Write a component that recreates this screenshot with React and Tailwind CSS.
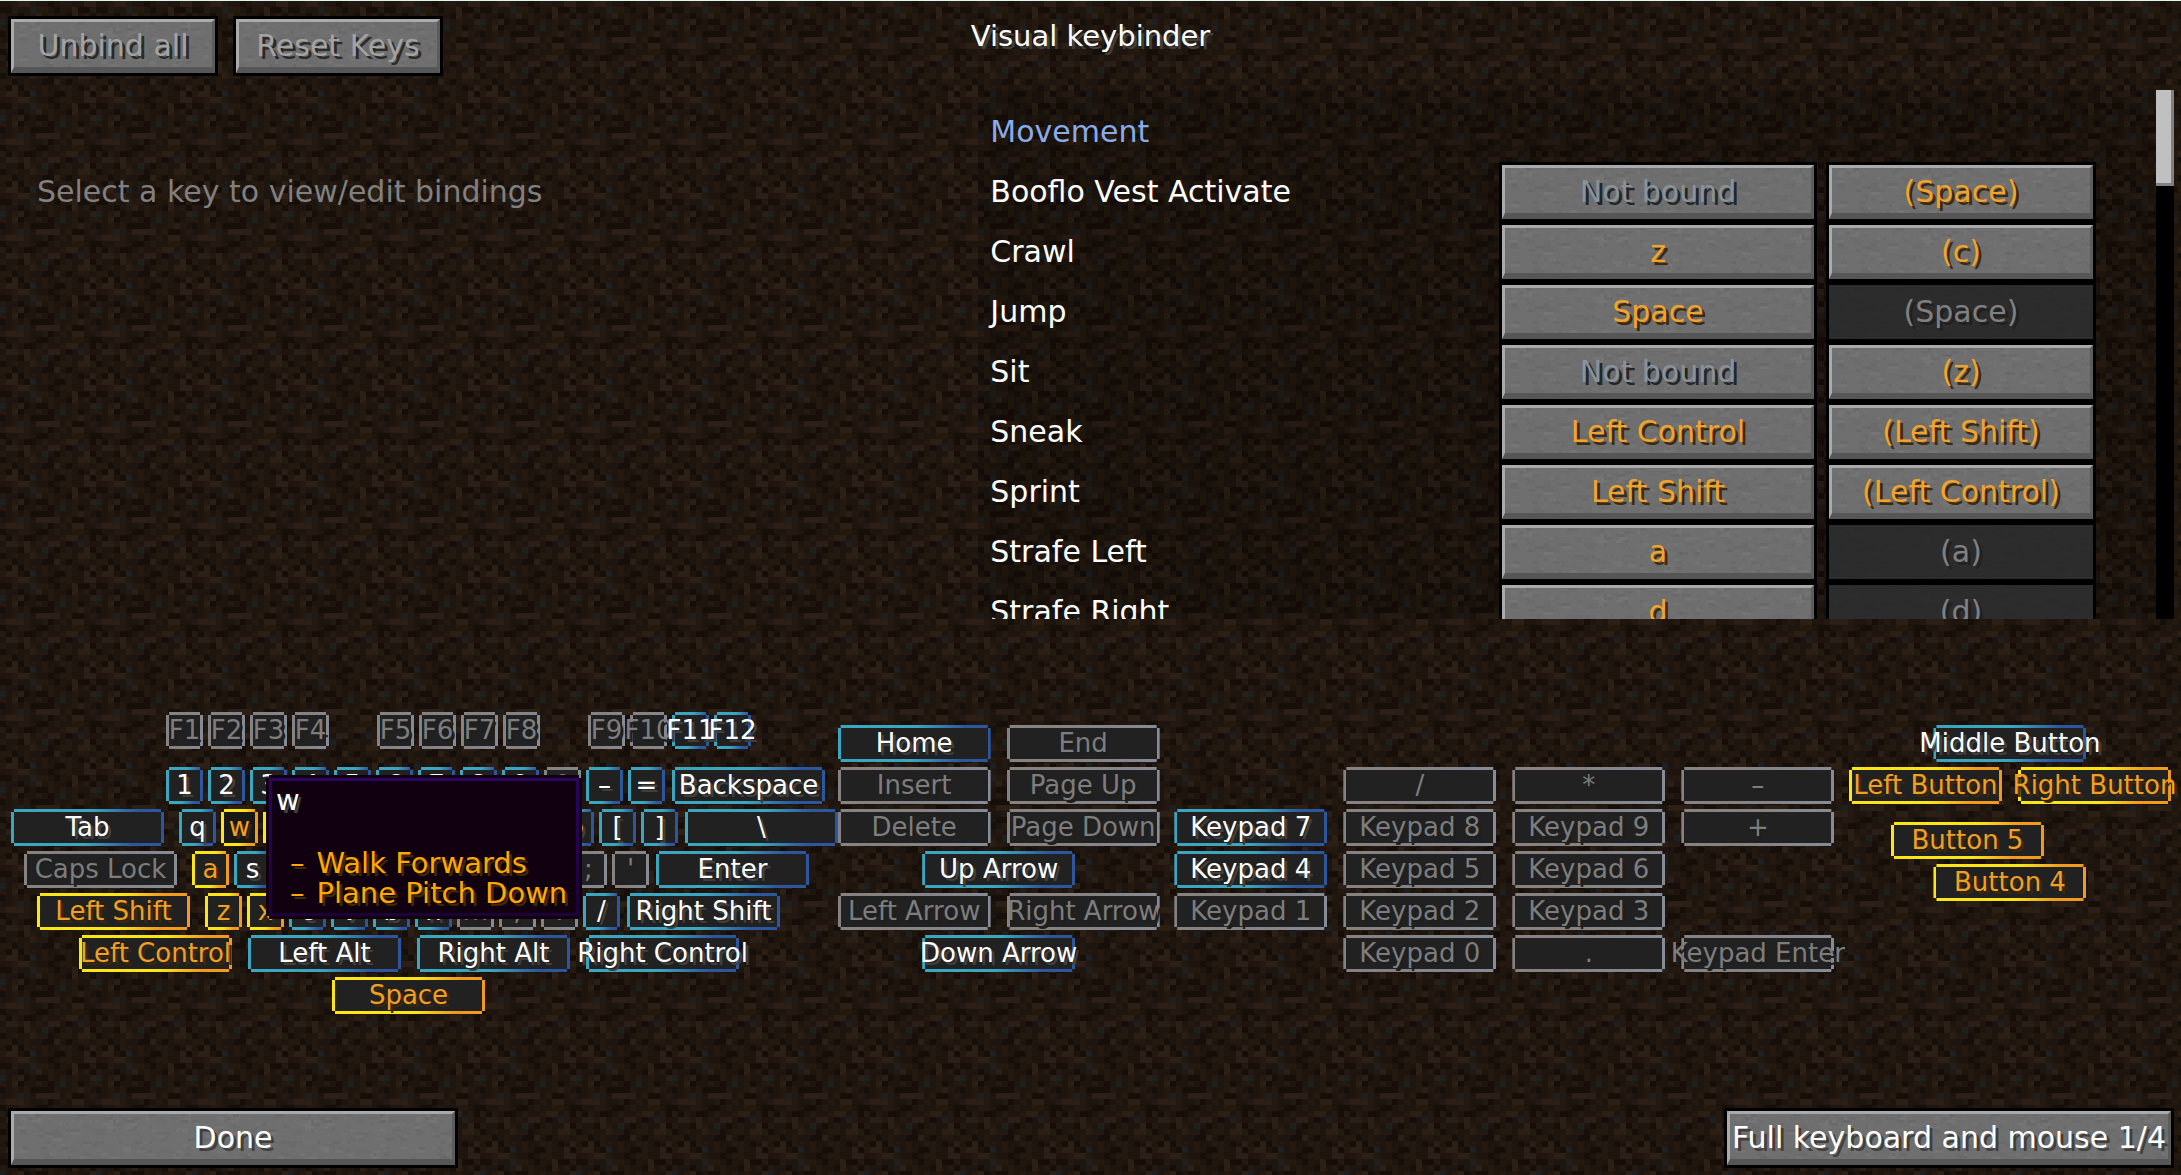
import { useState } from 'react'
import clsx from 'clsx'

// 16x16 dirt tile: D dark, . base, m mid, B light, s stone fleck
const DIRT = [
  '..mBBm..D.mm..BB',
  'DDm..smm.D..BDDm',
  'm..D.mB.m..DB.mD',
  's.mBD.DDm.m.m..B',
  'm.BD..m.D.s.mD.m',
  'D.m.mDDDDm..mBm.',
  '..msm.BBBB.mDD.m',
  'mBBBm..mD.m.BB..',
  'D..mm.DD.m..mm.D',
  'mDm.DD.m..mBB.mD',
  '.BBmB.m.BB.D.sm.',
  'm..DBm.s.D.m..BD',
  'D.m..BmmD.mm.BBm',
  'mmD.m..DDB.D.mm.',
  '.DBDmm.m..mm.D.B',
  'mBB.Ds.m.DDm..BD',
]

const DIRT_COLORS = { D: '#160e09', m: '#241910', B: '#2c1f16', s: '#1d2021' }

const STONE_COLORS = ['#686868', '#747474', '#6b6b6b', '#7a7a7a', '#636363']

// Small seeded generator so the stone grain is the same on every render
function makeStone(count) {
  const cells = []
  let seed = 17
  const next = (max) => {
    seed = (seed * 1103515245 + 12345) % 2147483648
    return Math.floor((seed / 2147483648) * max)
  }
  for (let i = 0; i < count; i++) {
    cells.push({ x: next(66) * 3, y: next(18) * 3, w: 3 + next(3) * 3, fill: STONE_COLORS[next(5)] })
  }
  return cells
}

const STONE = makeStone(230)

const BINDINGS = [
  { name: 'Booflo Vest Activate', bound: null, preset: 'Space' },
  { name: 'Crawl', bound: 'z', preset: 'c' },
  { name: 'Jump', bound: 'Space', preset: 'Space', isDefault: true },
  { name: 'Sit', bound: null, preset: 'z' },
  { name: 'Sneak', bound: 'Left Control', preset: 'Left Shift' },
  { name: 'Sprint', bound: 'Left Shift', preset: 'Left Control' },
  { name: 'Strafe Left', bound: 'a', preset: 'a', isDefault: true },
  { name: 'Strafe Right', bound: 'd', preset: 'd', isDefault: true },
]

// Key tones: gray = unbound, blue = one binding, gold = conflicting bindings
const TONES = {
  gray: {
    edge: 'bg-linear-[100deg,#858281_40%,#868b96_95%]',
    text: 'text-[#7d7d7d] [text-shadow:3px_3px_#1f1f1f]',
  },
  blue: {
    edge: 'bg-linear-[100deg,#3ca5bf_50%,#2c579f_80%]',
    text: 'text-white [text-shadow:3px_3px_#3f3f3f]',
  },
  gold: {
    edge: 'bg-linear-[100deg,#fbe516_55%,#f09b1e_80%]',
    text: 'text-[#f0a023] [text-shadow:3px_3px_#3c2808]',
  },
}

const NOTCHED = '[clip-path:polygon(3px_0,calc(100%-3px)_0,calc(100%-3px)_3px,100%_3px,100%_calc(100%-3px),calc(100%-3px)_calc(100%-3px),calc(100%-3px)_100%,3px_100%,3px_calc(100%-3px),0_calc(100%-3px),0_3px,3px_3px)]'

function Texture() {
  return (
    <svg className="absolute inset-0 size-full" aria-hidden="true" shapeRendering="crispEdges">
      <defs>
        <pattern id="dirt" width="96" height="96" y="1" patternUnits="userSpaceOnUse">
          <rect width="96" height="96" fill="#1e150e" />
          {DIRT.map((row, y) =>
            row.split('').map((cell, x) =>
              DIRT_COLORS[cell] ? (
                <rect key={`${x}-${y}`} x={x * 6} y={y * 6} width="6" height="6" fill={DIRT_COLORS[cell]} />
              ) : null
            )
          )}
        </pattern>
        <pattern id="stone" width="198" height="54" patternUnits="userSpaceOnUse">
          <rect width="198" height="54" fill="#6f6f6f" />
          {STONE.map((cell, i) => (
            <rect key={i} x={cell.x} y={cell.y} width={cell.w} height="3" fill={cell.fill} fillOpacity="0.45" />
          ))}
        </pattern>
      </defs>
      <rect width="100%" height="100%" fill="url(#dirt)" />
    </svg>
  )
}

function StoneButton({ children, className, tone = 'text-white [text-shadow:3px_3px_#3f3f3f]', pressed = false, onClick }) {
  return (
    <button
      type="button"
      onClick={onClick}
      className={clsx('relative flex h-[60px] shrink-0 items-center justify-center border-[3px] border-black whitespace-nowrap', className)}
    >
      <svg className="absolute inset-0 size-full" aria-hidden="true" shapeRendering="crispEdges">
        <rect width="100%" height="100%" fill="url(#stone)" />
      </svg>
      {pressed ? (
        <span className="absolute inset-0 bg-[#1c1c1c]/80" />
      ) : (
        <span className="absolute inset-0 border-[3px] border-b-[6px] border-t-[#aaaaaa] border-r-[#5c5c5c] border-b-[#565656] border-l-[#aaaaaa]" />
      )}
      <span className={clsx('relative', tone)}>{children}</span>
    </button>
  )
}

function Key({ label, tone = 'gray', wide = false, hovered = false }) {
  return (
    <button
      type="button"
      className={clsx('relative flex h-[37px] shrink-0 items-center justify-center text-[26px] leading-[37px] whitespace-nowrap', wide ? 'w-[153px]' : 'w-[37px]')}
    >
      <span className={clsx('absolute inset-0', NOTCHED, TONES[tone].edge)} />
      <span className={clsx('absolute inset-[3px]', hovered ? 'bg-[#171717]' : 'bg-[#212121]')} />
      <span className={clsx('relative', TONES[tone].text)}>{label}</span>
    </button>
  )
}

// Single-character keys; keys is a list of [label, tone]
function KeyGroup({ keys }) {
  return (
    <div className="flex gap-[5px]">
      {keys.map(([label, tone]) => (
        <Key key={label} label={label} tone={tone} hovered={label === 'w'} />
      ))}
    </div>
  )
}

const ROW_F1 = [['F1', 'gray'], ['F2', 'gray'], ['F3', 'gray'], ['F4', 'gray']]
const ROW_F5 = [['F5', 'gray'], ['F6', 'gray'], ['F7', 'gray'], ['F8', 'gray']]
const ROW_F9 = [['F9', 'gray'], ['F10', 'gray'], ['F11', 'blue'], ['F12', 'blue']]
const ROW_NUMBERS = [
  ['1', 'blue'], ['2', 'blue'], ['3', 'blue'], ['4', 'blue'], ['5', 'blue'], ['6', 'blue'],
  ['7', 'blue'], ['8', 'blue'], ['9', 'blue'], ['0', 'gray'], ['–', 'blue'], ['=', 'blue'],
]
const ROW_Q = [
  ['q', 'blue'], ['w', 'gold'], ['e', 'gold'], ['r', 'blue'], ['t', 'blue'], ['y', 'blue'],
  ['u', 'blue'], ['i', 'blue'], ['o', 'blue'], ['p', 'blue'], ['[', 'blue'], [']', 'blue'],
]
const ROW_A = [
  ['a', 'gold'], ['s', 'blue'], ['d', 'blue'], ['f', 'blue'], ['g', 'blue'], ['h', 'blue'],
  ['j', 'blue'], ['k', 'blue'], ['l', 'blue'], [';', 'gray'], ["'", 'gray'],
]
const ROW_Z = [
  ['z', 'gold'], ['x', 'gold'], ['c', 'blue'], ['v', 'blue'], ['b', 'blue'], ['n', 'blue'],
  ['m', 'gray'], [',', 'gray'], ['.', 'gray'], ['/', 'blue'],
]

function KeyTooltip() {
  return (
    <div
      role="tooltip"
      className={clsx('absolute top-[63px] left-[255px] z-10 h-[144px] w-[316px] bg-[#12000f] p-[3px]', NOTCHED)}
    >
      <div className="h-full bg-linear-to-b from-[#2a0563] to-[#1b0238] p-[3px]">
        <div className="h-full bg-[#11000f] pt-1 pl-1 text-[29px] leading-[30px] whitespace-nowrap">
          <p className="text-white [text-shadow:3px_3px_#3f3f3f]">w</p>
          <ul className="mt-[33px] pl-[14px] text-[#ffa800] [text-shadow:3px_3px_#3f2a00]">
            <li className="flex gap-3"><span>–</span>Walk Forwards</li>
            <li className="flex gap-3"><span>–</span>Plane Pitch Down</li>
          </ul>
        </div>
      </div>
    </div>
  )
}

function MainKeys() {
  return (
    <div className="relative flex w-[812px] flex-col gap-[5px]">
      <div className="mb-[13px] flex gap-12 pl-[155px]">
        <KeyGroup keys={ROW_F1} />
        <KeyGroup keys={ROW_F5} />
        <KeyGroup keys={ROW_F9} />
      </div>
      <div className="flex gap-[7px] pl-[155px]">
        <KeyGroup keys={ROW_NUMBERS} />
        <Key label="Backspace" tone="blue" wide />
      </div>
      <div className="flex gap-[7px]">
        <div className="flex gap-[15px]">
          <Key label="Tab" tone="blue" wide />
          <KeyGroup keys={ROW_Q} />
        </div>
        <Key label="\" tone="blue" wide />
      </div>
      <div className="flex gap-[7px] pl-[13px]">
        <div className="flex gap-[15px]">
          <Key label="Caps Lock" wide />
          <KeyGroup keys={ROW_A} />
        </div>
        <Key label="Enter" tone="blue" wide />
      </div>
      <div className="flex gap-[7px] pl-[26px]">
        <div className="flex gap-[15px]">
          <Key label="Left Shift" tone="gold" wide />
          <KeyGroup keys={ROW_Z} />
        </div>
        <Key label="Right Shift" tone="blue" wide />
      </div>
      <div className="flex gap-4 pl-[68px]">
        <Key label="Left Control" tone="gold" wide />
        <Key label="Left Alt" tone="blue" wide />
        <Key label="Right Alt" tone="blue" wide />
        <Key label="Right Control" tone="blue" wide />
      </div>
      <div className="flex pl-[321px]">
        <Key label="Space" tone="gold" wide />
      </div>
      <KeyTooltip />
    </div>
  )
}

function ArrowKeys() {
  return (
    <div className="flex flex-col items-center gap-[5px] pt-[13px]">
      <div className="grid grid-cols-2 gap-x-4 gap-y-[5px]">
        <Key label="Home" tone="blue" wide />
        <Key label="End" wide />
        <Key label="Insert" wide />
        <Key label="Page Up" wide />
        <Key label="Delete" wide />
        <Key label="Page Down" wide />
      </div>
      <Key label="Up Arrow" tone="blue" wide />
      <div className="flex gap-4">
        <Key label="Left Arrow" wide />
        <Key label="Right Arrow" wide />
      </div>
      <Key label="Down Arrow" tone="blue" wide />
    </div>
  )
}

function Keypad() {
  return (
    <div className="grid grid-cols-[repeat(4,153px)] gap-x-4 gap-y-[5px] pt-[55px]">
      <span />
      <Key label="/" wide />
      <Key label="*" wide />
      <Key label="–" wide />
      <Key label="Keypad 7" tone="blue" wide />
      <Key label="Keypad 8" wide />
      <Key label="Keypad 9" wide />
      <Key label="+" wide />
      <Key label="Keypad 4" tone="blue" wide />
      <Key label="Keypad 5" wide />
      <Key label="Keypad 6" wide />
      <span />
      <Key label="Keypad 1" wide />
      <Key label="Keypad 2" wide />
      <Key label="Keypad 3" wide />
      <span />
      <span />
      <Key label="Keypad 0" wide />
      <Key label="." wide />
      <Key label="Keypad Enter" wide />
    </div>
  )
}

function MouseKeys() {
  return (
    <div className="flex flex-col gap-[5px] pt-[13px]">
      <div className="flex justify-center">
        <Key label="Middle Button" tone="blue" wide />
      </div>
      <div className="mb-[13px] flex gap-4">
        <Key label="Left Button" tone="gold" wide />
        <Key label="Right Button" tone="gold" wide />
      </div>
      <div className="flex pl-[42px]">
        <Key label="Button 5" tone="gold" wide />
      </div>
      <div className="flex justify-center">
        <Key label="Button 4" tone="gold" wide />
      </div>
    </div>
  )
}

function BindingRow({ binding }) {
  const { name, bound, preset, isDefault } = binding
  return (
    <li className="flex h-[60px] items-center">
      <span className="flex-1">{name}</span>
      <StoneButton
        className="mr-[9px] w-[318px]"
        tone={bound ? 'text-[#f2a32b] [text-shadow:3px_3px_#3c2a0a]' : 'text-[#8a9299] [text-shadow:3px_3px_#222629]'}
      >
        {bound || 'Not bound'}
      </StoneButton>
      <StoneButton
        className="w-[270px]"
        pressed={isDefault}
        tone={isDefault ? 'text-[#808080] [text-shadow:3px_3px_#202020]' : 'text-[#f2a32b] [text-shadow:3px_3px_#3c2a0a]'}
      >
        ({preset})
      </StoneButton>
    </li>
  )
}

export default function App() {
  const [layout, setLayout] = useState(1)

  const disabledText = 'text-[#a3a3a3] [text-shadow:3px_3px_#2a2a2a]'

  return (
    <div className="relative flex h-screen flex-col overflow-hidden bg-[#1e150e] font-['DejaVu_Sans',sans-serif] text-[30px] leading-[36px] text-white">
      <Texture />

      {/* Toolbar */}
      <header className="relative grid h-[90px] shrink-0 grid-cols-3 items-start border-t border-[#dff5f0] px-2">
        <div className="flex gap-[15px] pt-[15px]">
          <StoneButton className="w-[210px]" tone={disabledText}>Unbind all</StoneButton>
          <StoneButton className="w-[210px]" tone={disabledText}>Reset Keys</StoneButton>
        </div>
        <h1 className="pt-[17px] text-center text-[29px] [text-shadow:3px_3px_#3f3f3f]">Visual keybinder</h1>
      </header>

      {/* Selected key panel and binding list */}
      <main className="relative flex min-h-0 flex-1 pr-[7px]">
        <section className="w-[45%] pt-[84px] pl-[37px] text-[#808080]">
          Select a key to view/edit bindings
        </section>
        <section className="flex flex-1 overflow-hidden bg-black/15 pl-3">
          <div className="flex-1 pt-3 pr-[60px]">
            <h2 className="flex h-[60px] items-center text-[#8aabe8]">Movement</h2>
            <ul>
              {BINDINGS.map(binding => (
                <BindingRow key={binding.name} binding={binding} />
              ))}
            </ul>
          </div>
          <div className="w-[18px] bg-black">
            <div className="h-24 border-r-[3px] border-b-[3px] border-[#808080] bg-[#c0c0c0]" />
          </div>
        </section>
      </main>

      {/* Keyboard and mouse */}
      <div className="relative flex shrink-0 items-start justify-between pt-[93px] pr-[10px] pb-[94px] pl-[11px]">
        <MainKeys />
        <ArrowKeys />
        <Keypad />
        <MouseKeys />
      </div>

      <footer className="relative flex shrink-0 justify-between pr-[7px] pb-[7px] pl-2">
        <StoneButton className="w-[450px]">Done</StoneButton>
        <StoneButton className="w-[450px]" onClick={() => setLayout(layout % 4 + 1)}>
          Full keyboard and mouse {layout}/4
        </StoneButton>
      </footer>
    </div>
  )
}
